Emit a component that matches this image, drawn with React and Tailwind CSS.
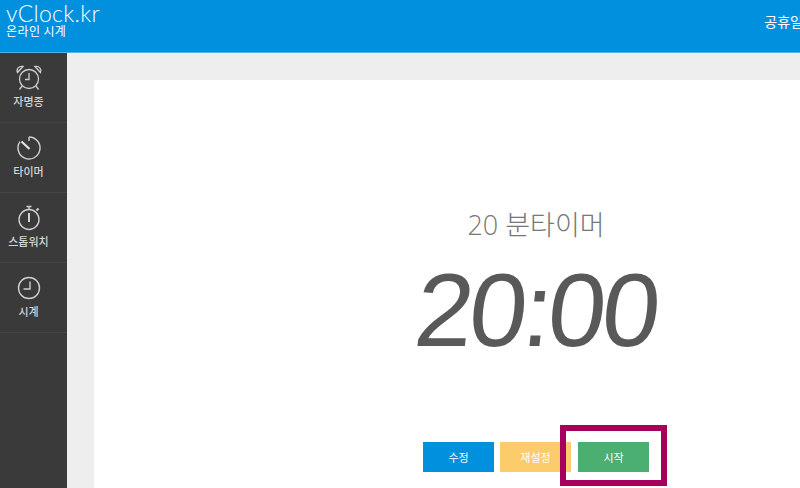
import React from 'react';

const KR = { fontFamily: '"Noto Sans CJK KR", "Open Sans", sans-serif' };

const AlarmIcon = () => (
  <svg width="28" height="28" viewBox="0 0 28 28" fill="none" stroke="#cfcfcf" strokeWidth="1.3">
    <circle cx="14" cy="15" r="9.500" />
    <path d="M14 9v6.500h-4" />
    <path d="M2.500 8.500C1 5 4 1.500 8 2.500z" />
    <path d="M25.500 8.500C27 5 24 1.500 20 2.500z" />
    <path d="M7 22l-2.500 3.500M21 22l2.500 3.500" />
  </svg>
);

const TimerIcon = () => (
  <svg width="26" height="26" viewBox="0 0 26 26" fill="none" stroke="#cfcfcf" strokeWidth="1.4">
    <path d="M13 2a11 11 0 1 1-9 4.700" />
    <path d="M13 2v4" />
    <path d="M5.500 6.500l8 7.500" strokeWidth="2.200" stroke="#e4e4e4" />
  </svg>
);

const StopwatchIcon = () => (
  <svg width="26" height="26" viewBox="0 0 26 26" fill="none" stroke="#cfcfcf" strokeWidth="1.4">
    <circle cx="13" cy="14.500" r="10" />
    <path d="M10.500 1.500h5M13 1.500v3" />
    <path d="M20.500 5.500l2-2" strokeWidth="2.200" />
    <path d="M13 8v9" strokeWidth="1.800" stroke="#e4e4e4" />
  </svg>
);

const ClockIcon = () => (
  <svg width="26" height="26" viewBox="0 0 26 26" fill="none" stroke="#cfcfcf" strokeWidth="1.4">
    <circle cx="13" cy="13" r="10.500" />
    <path d="M14 6.500v7.500H7.500" />
  </svg>
);

const MENU = [
  { label: '자명종', icon: <AlarmIcon /> },
  { label: '타이머', icon: <TimerIcon /> },
  { label: '스톱워치', icon: <StopwatchIcon /> },
  { label: '시계', icon: <ClockIcon /> },
];

export default function App() {
  return (
    <div className="relative w-[800px] h-[488px] overflow-hidden bg-[#eeeeee]" style={KR}>
      {/* header */}
      <header className="h-[53px] bg-[#0090de] border-b border-[#4fb2e8] flex items-start pl-[6px] text-white">
        <div>
          <div className="text-[23px] leading-[22px] mt-[2px] tracking-[0.3px] font-light" style={{ fontFamily: 'Lato, sans-serif' }}>vClock.kr</div>
          <div className="text-[12px] leading-[14px] tracking-[0.4px]">온라인 시계</div>
        </div>
        <div className="ml-auto mt-[12px] -mr-[3px] text-[14px] leading-[18px] shrink-0">공휴일</div>
      </header>

      <div className="flex h-[435px]">
        {/* sidebar */}
        <nav className="w-[67px] shrink-0 bg-[#3a3a3a]">
          {MENU.map((m) => (
            <div key={m.label} className="h-[70px] pr-[10px] border-b border-[#444444] flex flex-col items-center pt-[11px] text-[#d4d4d4]">
              <div className="h-[28px] flex items-center justify-center">{m.icon}</div>
              <div className="text-[11px] leading-[14px] mt-[2px] font-medium whitespace-nowrap">{m.label}</div>
            </div>
          ))}
        </nav>

        {/* content */}
        <main className="ml-[27px] mt-[27px] w-[884px] shrink-0 bg-white flex flex-col items-center">
          <h1 className="mt-[128px] text-[27px] leading-[34px] font-light text-[#777777]" style={{ fontFamily: '"Open Sans", "Noto Sans CJK KR", sans-serif' }}>20 분타이머</h1>
          <div className="mt-[20px] h-[96px] text-[104px] leading-[96px] font-normal text-[#595959] -skew-x-6 tracking-[-4px]" style={{ fontFamily: '"Liberation Sans", sans-serif' }}>20:00</div>
          <div className="mt-[84px] flex gap-[6px] text-white text-[11px]">
            <button className="w-[71px] h-[30px] bg-[#0090de]">수정</button>
            <button className="w-[71px] h-[30px] bg-[#fccb6b]">재설정</button>
            <button className="w-[71px] h-[30px] ml-[1px] bg-[#4caf72]">시작</button>
          </div>
        </main>
      </div>

      {/* annotation box */}
      <div className="absolute left-[560px] top-[425px] w-[107px] h-[61px] border-[6px] border-[#a5005a]" />
    </div>
  );
}
